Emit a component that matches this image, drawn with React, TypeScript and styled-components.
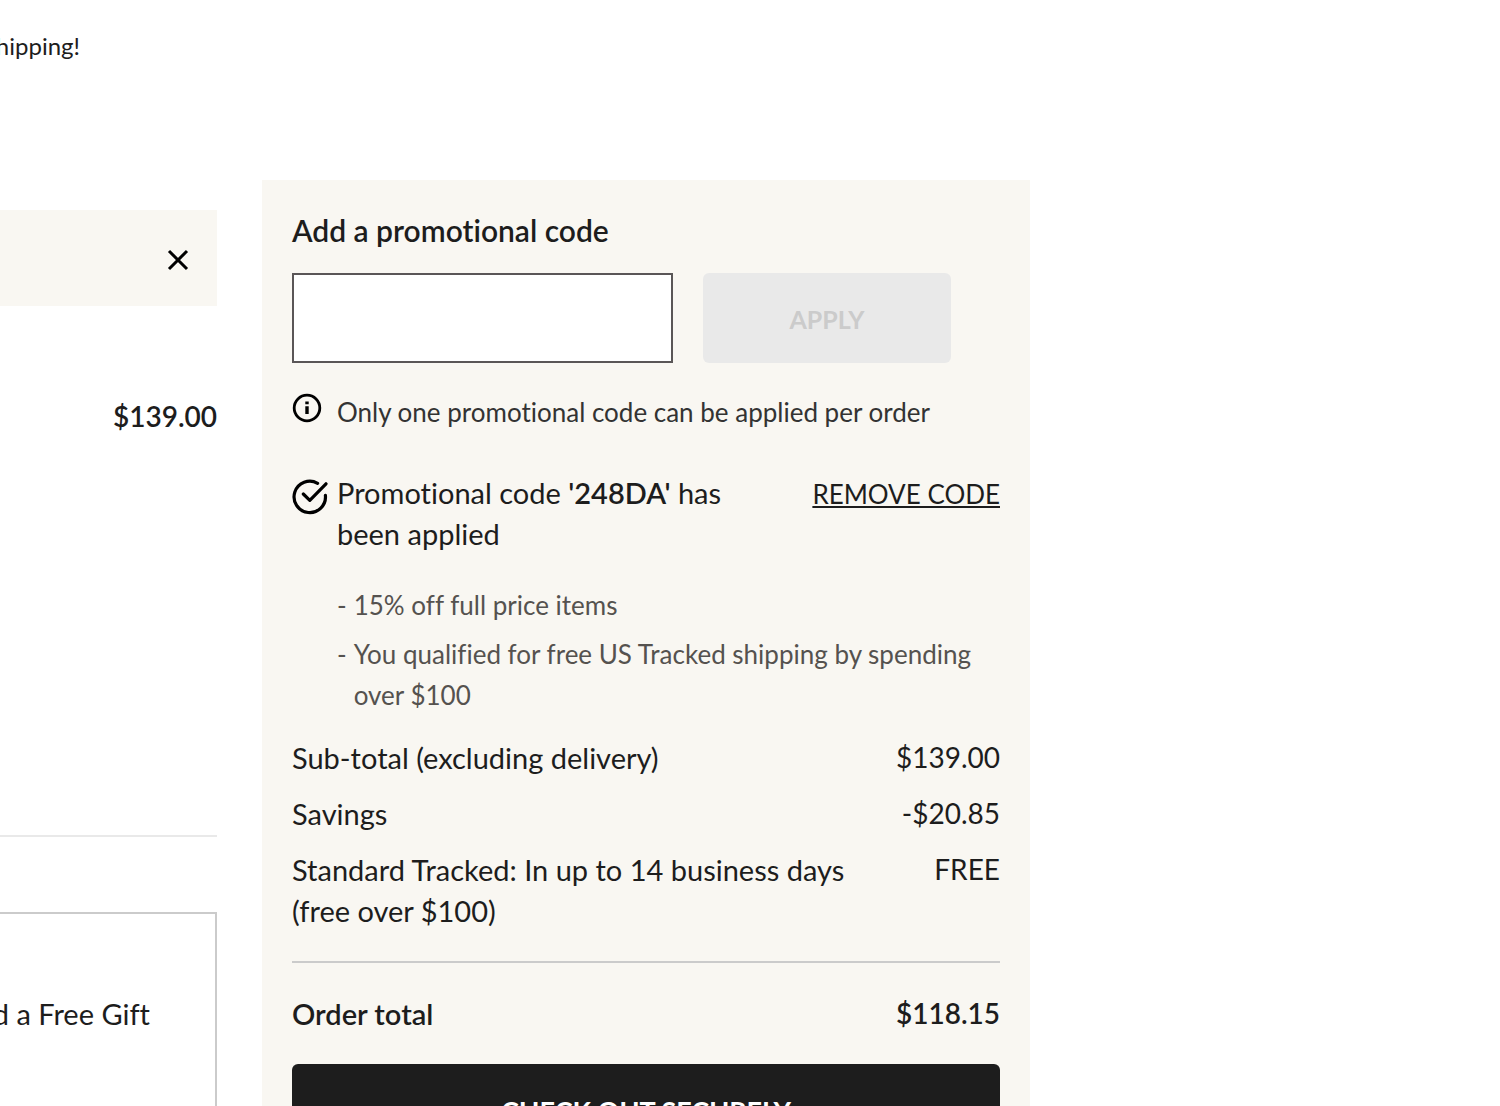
import React from "react";
import styled, { createGlobalStyle } from "styled-components";

const GlobalStyle = createGlobalStyle`
  *, *::before, *::after { box-sizing: border-box; }
  body {
    margin: 0;
    background: #fff;
    color: #1d1d1d;
    font-family: Lato, "Open Sans", sans-serif;
    font-size: 28px;
    line-height: 41px;
    font-variant-ligatures: none;
  }
  p, ul, dl, dd { margin: 0; padding: 0; }
`;

const Page = styled.div`
  display: grid;
  grid-template-columns: minmax(0, 1fr) 768px;
  column-gap: 45px;
  height: 100vh;
  padding-right: 470px;
  overflow: hidden;
`;

const Basket = styled.main`
  display: flex;
  flex-direction: column;
  padding-top: 25px;
`;

const ClippedLine = styled.p<{ $end: number; $small?: boolean }>`
  display: flex;
  justify-content: flex-end;
  padding-right: ${(p) => p.$end}px;
  font-size: ${(p) => (p.$small ? 24 : 29)}px;
  white-space: nowrap;
`;

const Notice = styled.div`
  display: flex;
  align-items: center;
  justify-content: flex-end;
  height: 96px;
  margin-top: 144px;
  padding: 4px 28px 0 0;
  background: #f9f7f2;
`;

const IconButton = styled.button`
  display: flex;
  padding: 0;
  border: 0;
  background: none;
  color: #000;
  cursor: pointer;
`;

const ItemPrice = styled.p`
  height: 439px;
  margin-top: 90px;
  font-weight: 600;
  text-align: right;
`;

const GiftCard = styled.section`
  flex: 1;
  margin-top: 75px;
  padding-top: 79px;
  border: 2px solid #cbcbcb;
  border-width: 2px 2px 0 0;
`;

const Divider = styled.hr<{ $light?: boolean }>`
  flex: none;
  width: 100%;
  height: 2px;
  margin: 0;
  border: 0;
  background: ${(p) => (p.$light ? "#e9e9e9" : "#cbcbcb")};
`;

const Summary = styled.aside`
  display: flex;
  flex-direction: column;
  margin-top: 180px;
  padding: 30px;
  background: #f9f7f2;
`;

const PromoForm = styled.form`
  display: grid;
  grid-template-columns: 381px 248px;
  gap: 22px 30px;
`;

const Label = styled.label`
  grid-column: 1 / -1;
  font-size: 30px;
  font-weight: 600;
`;

const CodeInput = styled.input`
  width: 100%;
  height: 90px;
  padding: 0 20px;
  border: 2px solid #5a5657;
  border-radius: 0;
  background: #fff;
  font: inherit;
`;

const Button = styled.button<{ $primary?: boolean }>`
  flex: none;
  height: 90px;
  padding: 3px 0 0;
  border: 0;
  border-radius: 6px;
  background: ${(p) => (p.$primary ? "#1d1d1d" : "#e9e9e9")};
  color: ${(p) => (p.$primary ? "#fff" : "#cbcbcb")};
  font: inherit;
  font-size: ${(p) => (p.$primary ? 27 : 25)}px;
  font-weight: 700;
`;

const IconRow = styled.div<{ $gap: number }>`
  display: grid;
  grid-template-columns: 45px minmax(0, 1fr) auto;
  align-items: start;
  margin-top: ${(p) => p.$gap}px;
`;

const IconSlot = styled.span<{ $top: number }>`
  display: flex;
  padding-top: ${(p) => p.$top}px;
  color: #000;
`;

const Info = styled.p`
  grid-column: 2 / -1;
  color: #333;
  font-size: 26px;
`;

const Applied = styled.p`
  max-width: 410px;
  font-size: 29px;
  strong { font-weight: 600; }
`;

const RemoveLink = styled.a`
  padding-top: 2px;
  color: inherit;
  font-size: 26px;
  text-decoration: underline;
  text-decoration-thickness: 2px;
  text-underline-offset: 2px;
`;

const Benefits = styled.ul`
  display: grid;
  gap: 8px;
  margin: 31px 0 21px 45px;
  color: #55524f;
  font-size: 26px;
  list-style: none;
`;

const Benefit = styled.li`
  display: flex;
  gap: 7px;
  &::before { content: "-"; }
`;

const Totals = styled.dl`
  display: grid;
  gap: 15px;
  margin-bottom: 30px;
`;

const TotalRow = styled.div<{ $strong?: boolean }>`
  display: flex;
  justify-content: space-between;
  gap: 40px;
  font-weight: ${(p) => (p.$strong ? 600 : 400)};
  dt { max-width: 580px; font-size: 29px; }
`;

const GrandTotal = styled.dl`
  margin: 30px 0;
`;

const CloseIcon = () => (
  <svg width="22" height="22" viewBox="0 0 22 22" fill="none" stroke="currentColor" strokeWidth="3" aria-hidden="true">
    <path d="M2 2 20 20M20 2 2 20" />
  </svg>
);

const InfoIcon = () => (
  <svg width="30" height="30" viewBox="0 0 30 30" fill="none" stroke="currentColor" aria-hidden="true">
    <circle cx="15" cy="15" r="12.8" strokeWidth="2.8" />
    <path d="M15 8.6v2.6M15 13.2v7.8" strokeWidth="3.4" />
  </svg>
);

const CheckIcon = () => (
  <svg width="36" height="36" viewBox="0 0 36 36" fill="none" stroke="currentColor" strokeWidth="3.2" aria-hidden="true">
    <path d="M25.6 4.3A15.7 15.7 0 1 0 33.4 16.4" strokeLinecap="round" />
    <path d="M11.3 15 17.8 21.3 34 4.8" strokeLinecap="round" strokeLinejoin="round" />
  </svg>
);

const benefits = [
  "15% off full price items",
  "You qualified for free US Tracked shipping by spending over $100",
];

const totals = [
  ["Sub-total (excluding delivery)", "$139.00"],
  ["Savings", "-$20.85"],
  ["Standard Tracked: In up to 14 business days (free over $100)", "FREE"],
];

export default function App() {
  return (
    <>
      <GlobalStyle />
      <Page>
        <Basket>
          <ClippedLine $end={137} $small>hipping!</ClippedLine>
          <Notice>
            <IconButton type="button" aria-label="Close">
              <CloseIcon />
            </IconButton>
          </Notice>
          <ItemPrice>$139.00</ItemPrice>
          <Divider $light />
          <GiftCard>
            <ClippedLine $end={65}>d a Free Gift</ClippedLine>
          </GiftCard>
        </Basket>
        <Summary>
          <PromoForm onSubmit={(e) => e.preventDefault()}>
            <Label htmlFor="promo">Add a promotional code</Label>
            <CodeInput id="promo" type="text" />
            <Button type="submit" disabled>APPLY</Button>
          </PromoForm>
          <IconRow $gap={29}>
            <IconSlot $top={1}><InfoIcon /></IconSlot>
            <Info>Only one promotional code can be applied per order</Info>
          </IconRow>
          <IconRow $gap={39}>
            <IconSlot $top={7}><CheckIcon /></IconSlot>
            <Applied>
              Promotional code <strong>'248DA'</strong> has been applied
            </Applied>
            <RemoveLink href="#">REMOVE CODE</RemoveLink>
          </IconRow>
          <Benefits>
            {benefits.map((text) => (
              <Benefit key={text}><span>{text}</span></Benefit>
            ))}
          </Benefits>
          <Totals>
            {totals.map(([name, value]) => (
              <TotalRow key={name}>
                <dt>{name}</dt>
                <dd>{value}</dd>
              </TotalRow>
            ))}
          </Totals>
          <Divider />
          <GrandTotal>
            <TotalRow $strong>
              <dt>Order total</dt>
              <dd>$118.15</dd>
            </TotalRow>
          </GrandTotal>
          <Button type="button" $primary>CHECK OUT SECURELY</Button>
        </Summary>
      </Page>
    </>
  );
}
